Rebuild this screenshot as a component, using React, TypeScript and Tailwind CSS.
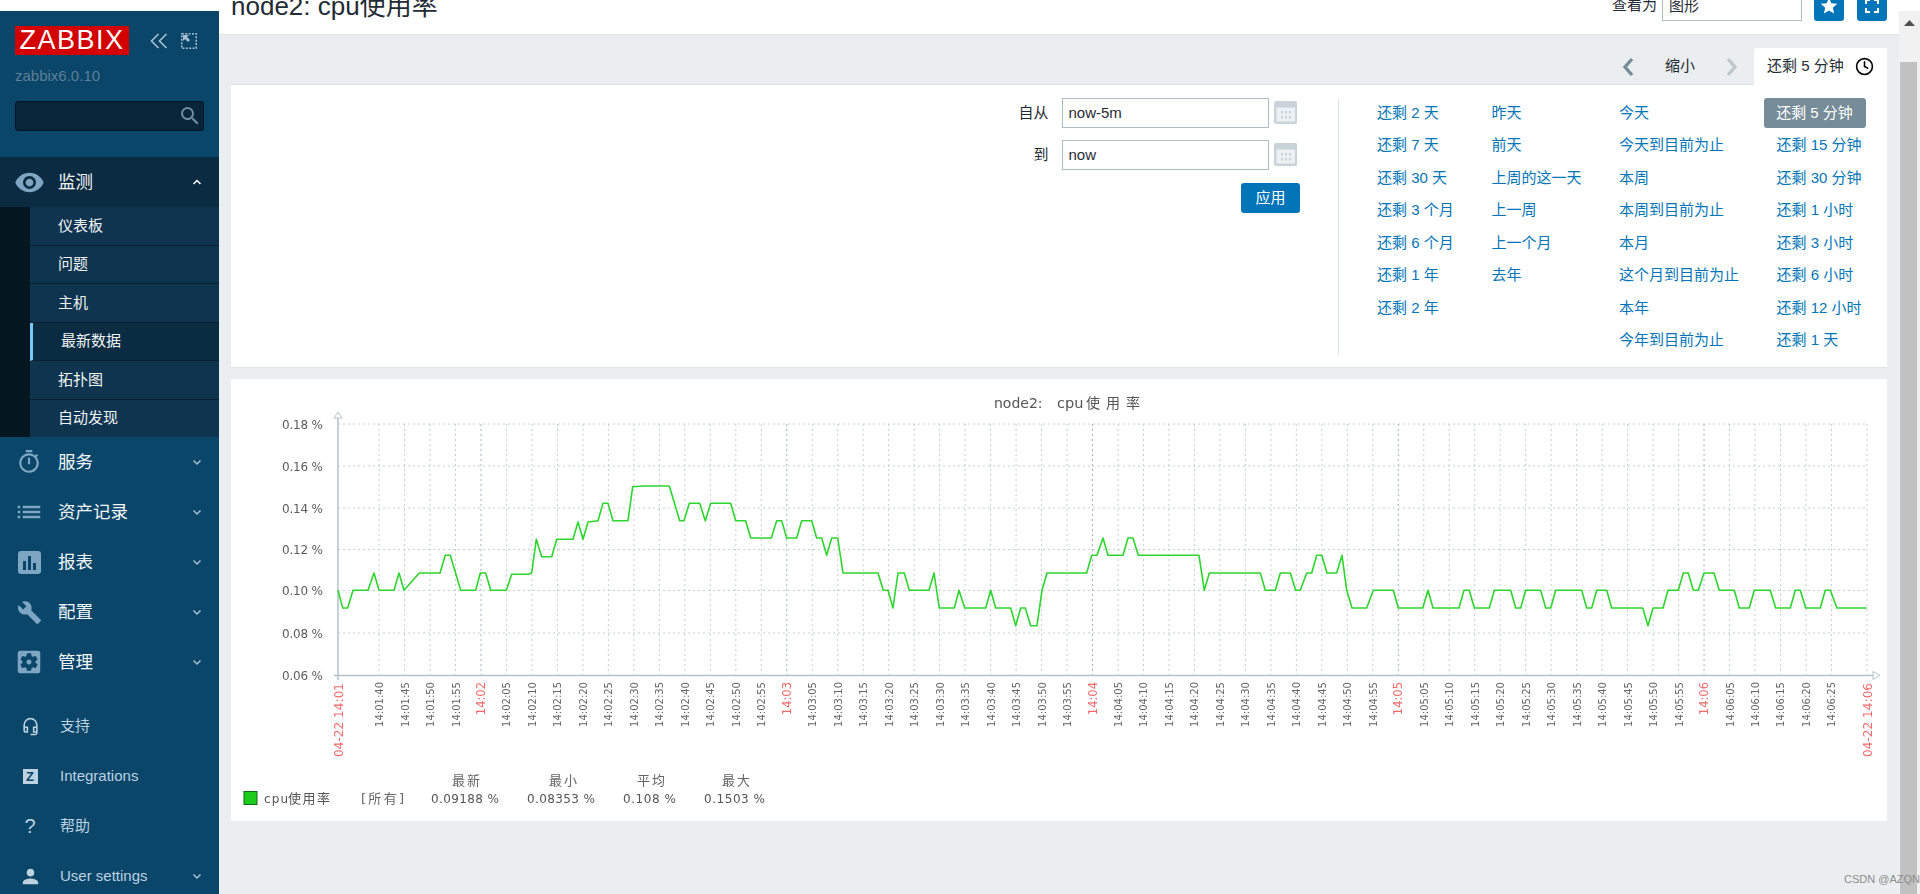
import React from "react";
import { MdVisibility, MdOutlineTimer, MdList, MdBuild, MdSettingsApplications, MdOutlineHeadsetMic, MdPerson, MdSearch, MdStar, MdFullscreen } from "react-icons/md";
import { Clock } from "lucide-react";

const toPts = (ox: number, oy: number, a: number[]) => {
  const out: string[] = [];
  for (let i = 0; i < a.length; i += 2) out.push(`${(ox + a[i] / 3).toFixed(1)},${(oy + a[i + 1] / 3).toFixed(1)}`);
  return out;
};

const line = [
  ...toPts(230, 380, [324,631,338,684,353,684,369,631,414,631,432,579,447,631,492,631,507,579,522,631,568,579,630,579,646,526,661,526,692,631,737,631,751,579,767,579,782,631,829,631,845,583,895,583,905,579,919,478,935,530,965,530,980,478,1029,478,1044,426,1059,478,1074,426,1104,422,1119,370,1134,370,1149,422,1194,422,1208,320,1240,318,1318,318,1349,422,1362,422,1378,370,1409,370,1426,422,1442,370]),
  ...toPts(720, 380, [32,370,47,422,77,422,92,474,154,474,170,422,185,422,200,474,230,474,245,422,275,422,290,474,305,474,320,526,335,474,353,474,369,579,474,579,490,631,504,631,519,684,534,579,553,579,568,631,627,631,642,579,658,684,703,684,717,631,734,684,797,684,812,631,827,684,872,684,887,737,902,684,916,684,932,737,951,737,966,631,981,579,1100,579,1115,526,1131,526,1149,474,1164,526,1209,526,1224,474,1239,474,1255,526,1437,526,1453,631,1468,579]),
  ...toPts(1210, 380, [151,579,166,631,196,631,211,579,241,579,257,631,271,631,290,579,305,579,320,526,335,526,351,579,380,579,396,526,410,631,426,684,470,684,490,631,550,631,565,684,638,684,654,631,669,684,747,684,762,631,778,631,793,684,838,684,853,631,902,631,917,684,932,684,947,631,992,631,1007,684,1022,684,1037,631,1115,631,1130,684,1145,684,1160,631,1190,631,1205,684,1298,684,1314,737,1329,684,1359,684,1374,631,1405,631,1420,579,1435,579,1450,631,1465,631]),
  ...toPts(1690, 560, [42,39,72,39,88,91,133,91,148,144,178,144,193,91,241,91,257,144,301,144,316,91,331,91,347,144,391,144,406,91,421,91,441,144,530,144]),
].join(" ");

const yGrid = [
  { y: 424, t: "0.18 %" },
  { y: 466, t: "0.16 %" },
  { y: 508, t: "0.14 %" },
  { y: 549.5, t: "0.12 %" },
  { y: 590.5, t: "0.10 %" },
  { y: 633, t: "0.08 %" },
  { y: 675, t: "0.06 %" },
];

const ticks: { x: number; label: string; major: boolean }[] = [];
for (let n = -4; n <= 53; n++) {
  const x = 481 + n * 25.48;
  const total = 14 * 3600 + 2 * 60 + n * 5;
  const h = Math.floor(total / 3600);
  const m = Math.floor((total % 3600) / 60);
  const s = total % 60;
  const pad = (v: number) => String(v).padStart(2, "0");
  const major = s === 0;
  ticks.push({ x, major, label: major ? `${pad(h)}:${pad(m)}` : `${pad(h)}:${pad(m)}:${pad(s)}` });
}

function Chart() {
  const dejavu = "'DejaVu Sans','Noto Sans CJK SC',sans-serif";
  return (
    <svg viewBox="231 379 1656 442" width="1656" height="442" className="block blur-[0.3px]" fontFamily={dejavu}>
      <text x="994" y="408" fontSize="14" fill="#555">node2:</text>
      <text x="1057" y="408" fontSize="14.5" fill="#555">cpu</text>
      <text x="1086" y="408" fontSize="14" fill="#555" textLength="54">使用率</text>

      {yGrid.slice(0, 6).map((g) => (
        <line key={g.y} x1="338" x2="1867" y1={g.y} y2={g.y} stroke="#c6ced6" strokeDasharray="2 3" />
      ))}
      {ticks.map((t) => (
        <line key={t.x} x1={t.x} x2={t.x} y1="424" y2="675" stroke={t.major ? "#a5b3c0" : "#c6ced6"} strokeDasharray="2 3" />
      ))}
      <line x1="1867" x2="1867" y1="424" y2="675" stroke="#c6ced6" strokeDasharray="2 3" />

      <line x1="338" x2="338" y1="418" y2="680" stroke="#b4c2cc" strokeWidth="1.5" />
      <line x1="334" x2="1873" y1="675.4" y2="675.4" stroke="#b4c2cc" strokeWidth="1.5" />
      <polygon points="338,412 342,418 334,418" fill="#fff" stroke="#b4c2cc" />
      <polygon points="1880,675.4 1873,671.5 1873,679.5" fill="#fff" stroke="#b4c2cc" />

      <polyline points={line} fill="none" stroke="#2ed52e" strokeWidth="1.6" strokeLinejoin="round" />

      {yGrid.map((g) => (
        <text key={g.t} x="323" y={g.y + 4.5} textAnchor="end" fontSize="12" fill="#5c5c5c" textLength="41">{g.t}</text>
      ))}

      {ticks.map((t) => (
        <text
          key={t.label}
          transform={`rotate(-90 ${t.x + 4} 682)`}
          x={t.x + 4}
          y="682"
          textAnchor="end"
          fontSize={t.major ? 11.5 : 10}
          fill={t.major ? "#f46a6a" : "#666"}
        >
          {t.label}
        </text>
      ))}
      <text transform="rotate(-90 343 683)" x="343" y="683" textAnchor="end" fontSize="12" fill="#f46a6a" textLength="74">04-22 14:01</text>
      <text transform="rotate(-90 1872 683)" x="1872" y="683" textAnchor="end" fontSize="12" fill="#f46a6a" textLength="74">04-22 14:06</text>

      <text x="452" y="785" fontSize="13" fill="#666" textLength="28">最新</text>
      <text x="549" y="785" fontSize="13" fill="#666" textLength="28">最小</text>
      <text x="637" y="785" fontSize="13" fill="#666" textLength="28">平均</text>
      <text x="722" y="785" fontSize="13" fill="#666" textLength="28">最大</text>

      <rect x="244" y="791.5" width="13" height="13" fill="#1ccc1c" stroke="#0f6b0f" />
      <text x="264" y="803" fontSize="12" fill="#555" textLength="24">cpu</text>
      <text x="288" y="803" fontSize="13" fill="#555" textLength="42">使用率</text>
      <text x="361" y="803" fontSize="13" fill="#666" textLength="43">[所有]</text>
      <text x="431" y="803" fontSize="12" fill="#555" textLength="68">0.09188 %</text>
      <text x="527" y="803" fontSize="12" fill="#555" textLength="68">0.08353 %</text>
      <text x="623" y="803" fontSize="12" fill="#555" textLength="53">0.108 %</text>
      <text x="704" y="803" fontSize="12" fill="#555" textLength="61">0.1503 %</text>
    </svg>
  );
}

function Chevron({ up, light }: { up?: boolean; light?: boolean }) {
  return (
    <svg width="10" height="8" viewBox="0 0 10 8" className="shrink-0">
      <polyline
        points={up ? "1.5,6 5,2.5 8.5,6" : "1.5,2.5 5,6 8.5,2.5"}
        fill="none"
        stroke={light ? "#ffffff" : "#a5bfd0"}
        strokeWidth="1.5"
      />
    </svg>
  );
}

function ReportIcon() {
  return (
    <svg width="23" height="23" viewBox="0 0 23 23">
      <rect width="23" height="23" rx="3" fill="#7ea6c2" />
      <rect x="5" y="10" width="3" height="9" fill="#0a466a" />
      <rect x="10" y="5" width="3" height="14" fill="#0a466a" />
      <rect x="15" y="12" width="3" height="7" fill="#0a466a" />
    </svg>
  );
}

function NavRow({ icon, label, active }: { icon: React.ReactNode; label: string; active?: boolean }) {
  return (
    <div className={`flex h-[50px] items-center ${active ? "bg-[#0a2b41]" : ""}`}>
      <div className="flex w-[58px] shrink-0 items-center justify-center pr-[0px] text-[#7ea6c2]">{icon}</div>
      <span className="flex-1 text-[17.5px] text-[#f4f7f9]">{label}</span>
      <span className="mr-[17px]"><Chevron up={active} light={active} /></span>
    </div>
  );
}

function FooterRow({ icon, label, chevron }: { icon: React.ReactNode; label: string; chevron?: boolean }) {
  return (
    <div className="flex h-[50px] items-center">
      <div className="flex w-[60px] shrink-0 items-center justify-center text-[#bcd2e0]">{icon}</div>
      <span className="flex-1 text-[15px] text-[#bcd2e0]">{label}</span>
      {chevron && <span className="mr-[17px]"><Chevron /></span>}
    </div>
  );
}

function Sidebar() {
  const subs = ["仪表板", "问题", "主机", "最新数据", "拓扑图", "自动发现"];
  return (
    <aside className="mt-[11px] w-[219px] shrink-0 bg-[#0a466a]">
      <div className="flex h-[131px] flex-col px-[15px] pt-[15px]">
        <div className="flex h-[29px] items-center">
          <div className="flex h-[29px] w-[114px] items-center justify-center bg-[#d40000] text-[27px] leading-none tracking-[1.5px] text-white">ZABBIX</div>
          <svg width="18" height="16" viewBox="0 0 18 16" className="ml-[21px] text-[#a9c2d3]">
            <polyline points="8.5,1 1.5,8 8.5,15" fill="none" stroke="currentColor" strokeWidth="1.6" />
            <polyline points="16.5,1 9.5,8 16.5,15" fill="none" stroke="currentColor" strokeWidth="1.6" />
          </svg>
          <svg width="16" height="16" viewBox="0 0 16 16" className="ml-[13px] text-[#a9c2d3]">
            <rect x="0.75" y="0.75" width="14.5" height="14.5" fill="none" stroke="currentColor" strokeWidth="1.5" strokeDasharray="2 1.4" />
            <polygon points="2,2 8,2 6,4 9,7 7,9 4,6 2,8" fill="currentColor" />
          </svg>
        </div>
        <div className="mt-[11px] h-[20px] text-[15px] leading-[20px] text-[#5e7f96]">zabbix6.0.10</div>
        <div className="mt-[15px] flex h-[30px] w-[189px] items-center justify-end rounded-[3px] border border-[#04161f] bg-[#07263a] pr-[1px] text-[#6f8fa3]">
          <MdSearch size={24} />
        </div>
      </div>
      <div className="mt-[15px]">
        <NavRow active icon={<MdVisibility size={31} />} label="监测" />
        <div className="flex h-[230px] bg-[#04161f] pl-[30px]">
          <div className="flex flex-1 flex-col">
            {subs.map((s, i) => (
              <div
                key={s}
                className={`flex flex-1 items-center border-b pl-[28px] text-[15px] text-[#f0f4f7] last:border-b-0 ${
                  i === 3 ? "border-[#0a2030] border-l-[3px] border-l-[#79c7ff] bg-[#0a2c42] pl-[25px]" : "border-[#0a2030] bg-[#0f344f]"
                }`}
              >
                {s}
              </div>
            ))}
          </div>
        </div>
        <NavRow icon={<MdOutlineTimer size={26} />} label="服务" />
        <NavRow icon={<MdList size={30} />} label="资产记录" />
        <NavRow icon={<ReportIcon />} label="报表" />
        <NavRow icon={<MdBuild size={25} />} label="配置" />
        <NavRow icon={<MdSettingsApplications size={30} />} label="管理" />
      </div>
      <div className="mt-[14px]">
        <FooterRow icon={<MdOutlineHeadsetMic size={19} />} label="支持" />
        <FooterRow
          icon={<span className="flex h-[15px] w-[15px] items-center justify-center bg-[#bcd2e0] text-[13px] font-bold leading-none text-[#0a466a]">Z</span>}
          label="Integrations"
        />
        <FooterRow icon={<span className="text-[20px] leading-none">?</span>} label="帮助" />
        <FooterRow icon={<MdPerson size={23} />} label="User settings" chevron />
      </div>
    </aside>
  );
}

function CalendarIcon() {
  return (
    <svg width="23.5" height="23" viewBox="0 0 23.5 23" className="ml-[5px] shrink-0">
      <rect width="23.5" height="23" rx="2.5" fill="#c9d3d9" />
      <rect x="2.5" y="6.5" width="18.5" height="14" fill="#eef1f3" />
      {[7, 11, 15].map((x) =>
        [10, 15].map((y) => <rect key={`${x}-${y}`} x={x} y={y} width="2" height="2.5" fill="#c9d3d9" />)
      )}
    </svg>
  );
}

function DateRow({ label, value }: { label: string; value: string }) {
  return (
    <div className="flex items-center pr-[3px]">
      <span className="relative mr-[13px] text-[15px] text-[#1f2c33]">{label}</span>
      <div className="flex h-[29.5px] w-[207px] items-center border border-[#acbbc4] pl-[6px] text-[15px] text-[#1f2c33]">{value}</div>
      <CalendarIcon />
    </div>
  );
}

const cols: { w: string; items: string[] }[] = [
  { w: "w-[114.5px]", items: ["还剩 2 天", "还剩 7 天", "还剩 30 天", "还剩 3 个月", "还剩 6 个月", "还剩 1 年", "还剩 2 年"] },
  { w: "w-[127.5px]", items: ["昨天", "前天", "上周的这一天", "上一周", "上一个月", "去年"] },
  { w: "w-[144.5px]", items: ["今天", "今天到目前为止", "本周", "本周到目前为止", "本月", "这个月到目前为止", "本年", "今年到目前为止"] },
];
const col4 = ["还剩 15 分钟", "还剩 30 分钟", "还剩 1 小时", "还剩 3 小时", "还剩 6 小时", "还剩 12 小时", "还剩 1 天"];

function FilterPanel() {
  return (
    <section className="flex h-[284px] border-y border-[#dfe4e7] bg-white">
      <div className="flex w-[1069px] shrink-0 flex-col items-end pt-[13px]">
        <DateRow label="自从" value="now-5m" />
        <div className="mt-[12.5px]"><DateRow label="到" value="now" /></div>
        <button className="mt-[13.5px] h-[30px] w-[59px] rounded-[3px] bg-[#0275b8] text-[15px] text-white">应用</button>
      </div>
      <div className="ml-[38px] mt-[13px] h-[257px] w-px bg-[#dfe4e7]" />
      <div className="ml-[38px] mt-[11.5px] flex text-[15px] text-[#0275b8]">
        {cols.map((c) => (
          <div key={c.w} className={`flex flex-col ${c.w}`}>
            {c.items.map((t) => (
              <div key={t} className="flex h-[32.57px] items-center whitespace-nowrap">{t}</div>
            ))}
          </div>
        ))}
        <div className="flex w-[102px] flex-col">
          <div className="flex h-[32.57px] items-center">
            <div className="flex h-[30px] w-[102px] items-center justify-center rounded-[3px] bg-[#768d99] text-white">还剩 5 分钟</div>
          </div>
          {col4.map((t) => (
            <div key={t} className="flex h-[32.57px] items-center whitespace-nowrap pl-[13px]">{t}</div>
          ))}
        </div>
      </div>
    </section>
  );
}

function Scrollbar() {
  return (
    <div className="mt-[11px] flex w-[21px] shrink-0 flex-col bg-[#ebeef0]">
      <div className="ml-[0px] flex h-[883px] w-[21px] flex-col items-center bg-[#f1f1f1]">
        <div className="flex h-[51px] w-full items-start justify-center pt-[9px]">
          <svg width="11" height="6" viewBox="0 0 11 6"><polygon points="5.5,0 11,6 0,6" fill="#505050" /></svg>
        </div>
        <div className="ml-[-2px] w-[17px] flex-1 bg-[#c1c1c1]" />
      </div>
    </div>
  );
}

export default function App() {
  return (
    <div className="relative flex h-[894px] w-[1920px] overflow-hidden bg-white [font-family:'Liberation_Sans','Noto_Sans_CJK_SC',sans-serif]">
      <Sidebar />
      <main className="flex min-w-0 flex-1 flex-col bg-[#ebeef0]">
        <header className="flex h-[35px] shrink-0 items-end overflow-hidden border-b border-[#dfe4e7] bg-white pb-[13px] pl-[12px] pr-[12px]">
          <h1 className="flex-1 whitespace-nowrap text-[26px] leading-[30px] text-[#1f2c33]">node2: cpu使用率</h1>
          <span className="mb-[6px] mr-[5px] text-[15px] leading-[20px] text-[#1f2c33]">查看为</span>
          <div className="flex h-[30px] w-[140px] items-center border border-[#acbbc4] pl-[6px] text-[15px] text-[#1f2c33]">图形</div>
          <button className="ml-[12px] flex h-[30px] w-[30px] items-center justify-center rounded-[3px] bg-[#0275b8] text-white"><MdStar size={20} /></button>
          <button className="ml-[13px] flex h-[30px] w-[30px] items-center justify-center rounded-[3px] bg-[#0275b8] text-white"><MdFullscreen size={24} /></button>
        </header>
        <div className="flex flex-1 flex-col px-[12px]">
          <div className="relative z-10 -mb-px flex h-[50px] shrink-0 items-end justify-end">
            <div className="flex h-[37px] items-center">
              <svg width="14" height="22" viewBox="0 0 14 22"><polyline points="11,3 4,11 11,19" fill="none" stroke="#768d99" strokeWidth="3.4" /></svg>
              <span className="ml-[30px] text-[15px] text-[#1f2c33]">缩小</span>
              <svg width="14" height="22" viewBox="0 0 14 22" className="ml-[30px]"><polyline points="3,3 10,11 3,19" fill="none" stroke="#bcc8ce" strokeWidth="3.4" /></svg>
            </div>
            <div className="ml-[15px] flex h-[37px] w-[133px] items-center justify-between rounded-t-[3px] bg-white px-[13px] text-[15px] text-[#1f2c33]">
              <span>还剩 5 分钟</span>
              <Clock size={19} strokeWidth={2} className="text-black" />
            </div>
          </div>
          <FilterPanel />
          <section className="mt-[11px] h-[442px] shrink-0 bg-white">
            <Chart />
          </section>
        </div>
      </main>
      <Scrollbar />
      <span className="absolute left-[1844px] top-[872px] text-[11px] leading-[14px] text-[#8c8c8c]">CSDN @AZQN</span>
    </div>
  );
}
